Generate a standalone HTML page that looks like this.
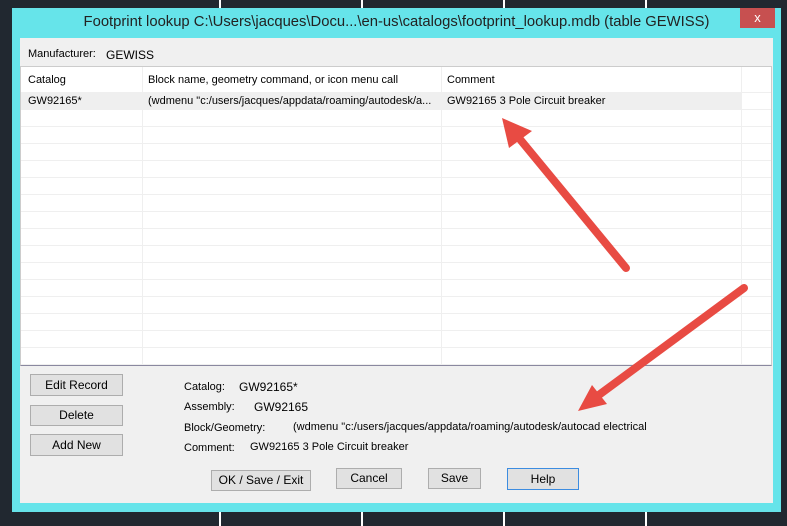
<!DOCTYPE html>
<html><head><style>
body{margin:0;width:787px;height:526px;background:#212830;position:relative;overflow:hidden;font-family:"Liberation Sans",sans-serif;font-size:11px;color:#000}
.v{position:absolute;top:0;height:526px;width:2px;background:#fff}
.win{position:absolute;left:12px;top:8px;width:769px;height:504px;background:#66e4ea}
.title{position:absolute;left:0;right:0;top:6px;text-align:center;font-size:14.8px;color:#222}
.close{position:absolute;left:728px;top:0;width:35px;height:20px;background:#c75050;color:#fff;text-align:center;font-size:13px;line-height:19px}
.client{position:absolute;left:8px;top:30px;width:753px;height:465px;background:#f0f0f0}
.abs{position:absolute;white-space:nowrap}
.grid{position:absolute;left:0;top:28px;width:750px;height:298px;background:#fff;border:1px solid #ccc;border-bottom:1px solid #8a88a0;overflow:hidden}
.btn{position:absolute;background:#e1e1e1;border:1px solid #adadad;text-align:center;font-size:12px;box-sizing:border-box}
</style></head><body>
<div class="v" style="left:219px"></div><div class="v" style="left:361px"></div><div class="v" style="left:503px"></div><div class="v" style="left:645px"></div>
<div class="win">
<div class="title">Footprint lookup C:\Users\jacques\Docu...\en-us\catalogs\footprint_lookup.mdb (table GEWISS)</div>
<div class="close">x</div>
<div class="client">
<div class="abs" style="left:8px;top:10px">Manufacturer:</div>
<div class="abs" style="left:86px;top:10px;font-size:12px">GEWISS</div>
<div class="grid">
<svg width="751" height="298" style="position:absolute;left:0;top:0">
<rect x="0" y="0" width="751" height="25" fill="#fff"/>
<rect x="0" y="25" width="721" height="17" fill="#efefef"/>
<g stroke="#efefef" stroke-width="1">
<line x1="121.5" y1="0" x2="121.5" y2="298"/><line x1="420.5" y1="0" x2="420.5" y2="298"/><line x1="720.5" y1="0" x2="720.5" y2="298"/>
<line x1="0" y1="25.5" x2="751" y2="25.5"/>
<line x1="0" y1="42.5" x2="751" y2="42.5"/><line x1="0" y1="59.5" x2="751" y2="59.5"/><line x1="0" y1="76.5" x2="751" y2="76.5"/><line x1="0" y1="93.5" x2="751" y2="93.5"/><line x1="0" y1="110.5" x2="751" y2="110.5"/><line x1="0" y1="127.5" x2="751" y2="127.5"/><line x1="0" y1="144.5" x2="751" y2="144.5"/><line x1="0" y1="161.5" x2="751" y2="161.5"/><line x1="0" y1="178.5" x2="751" y2="178.5"/><line x1="0" y1="195.5" x2="751" y2="195.5"/><line x1="0" y1="212.5" x2="751" y2="212.5"/><line x1="0" y1="229.5" x2="751" y2="229.5"/><line x1="0" y1="246.5" x2="751" y2="246.5"/><line x1="0" y1="263.5" x2="751" y2="263.5"/><line x1="0" y1="280.5" x2="751" y2="280.5"/><line x1="0" y1="297.5" x2="751" y2="297.5"/>
</g></svg>
<div class="abs" style="left:7px;top:7px">Catalog</div>
<div class="abs" style="left:127px;top:7px">Block name, geometry command, or icon menu call</div>
<div class="abs" style="left:426px;top:7px">Comment</div>
<div class="abs" style="left:7px;top:28px">GW92165*</div>
<div class="abs" style="left:127px;top:28px">(wdmenu "c:/users/jacques/appdata/roaming/autodesk/a...</div>
<div class="abs" style="left:426px;top:28px">GW92165 3 Pole Circuit breaker</div>
</div>
<div class="btn" style="left:10px;top:336px;width:93px;height:22px;line-height:20px">Edit Record</div>
<div class="btn" style="left:10px;top:367px;width:93px;height:21px;line-height:19px">Delete</div>
<div class="btn" style="left:10px;top:396px;width:93px;height:22px;line-height:20px">Add New</div>
<div class="abs" style="left:164px;top:343px">Catalog:</div><div class="abs" style="left:219px;top:342px;font-size:12px">GW92165*</div>
<div class="abs" style="left:164px;top:363px">Assembly:</div><div class="abs" style="left:234px;top:362px;font-size:12px">GW92165</div>
<div class="abs" style="left:164px;top:384px">Block/Geometry:</div><div class="abs" style="left:273px;top:383px">(wdmenu "c:/users/jacques/appdata/roaming/autodesk/autocad electrical</div>
<div class="abs" style="left:164px;top:404px">Comment:</div><div class="abs" style="left:230px;top:403px">GW92165 3 Pole Circuit breaker</div>
<div class="btn" style="left:191px;top:432px;width:100px;height:21px;line-height:19px">OK / Save / Exit</div>
<div class="btn" style="left:316px;top:430px;width:66px;height:21px;line-height:19px">Cancel</div>
<div class="btn" style="left:408px;top:430px;width:53px;height:21px;line-height:19px">Save</div>
<div class="btn" style="left:487px;top:430px;width:72px;height:22px;line-height:20px;border-color:#3c8ce0">Help</div>
</div></div>
<svg width="787" height="526" style="position:absolute;left:0;top:0">
<g stroke="#e84b43" stroke-width="8" stroke-linecap="round" fill="#e84b43">
<line x1="626" y1="268" x2="514" y2="132"/>
<line x1="744" y1="288" x2="592" y2="400"/>
</g>
<polygon points="502,118 532,131 509,148" fill="#e84b43"/>
<polygon points="578,411 592,385 607,404" fill="#e84b43"/>
</svg>
</body></html>
